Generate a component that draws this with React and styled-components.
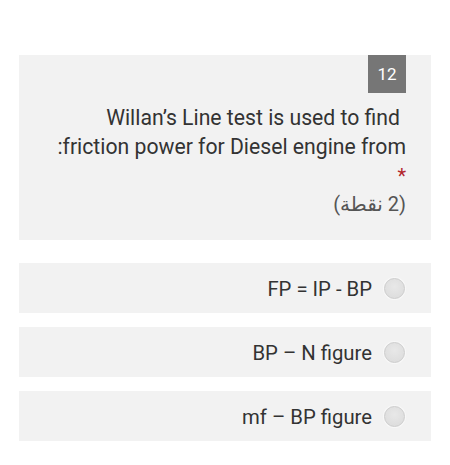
import React from "react";
import styled, { createGlobalStyle } from "styled-components";

const Global = createGlobalStyle`
  html, body { margin: 0; padding: 0; background: #fff; }
  body { font-family: Roboto, "Noto Sans", Arial, sans-serif; }
`;

const Page = styled.div`
  padding: 55px 19px 0 19px;
  display: flex;
  flex-direction: column;
  gap: 23px;
`;

const QuestionCard = styled.div`
  background: #f2f2f2;
  height: 185px;
  box-sizing: border-box;
  padding: 0 25px 0 20px;
  display: flex;
  flex-direction: column;
  align-items: flex-end;
`;

const Badge = styled.div`
  width: 38px;
  height: 38px;
  background: #767676;
  color: #fff;
  font-size: 17px;
  display: flex;
  align-items: center;
  justify-content: center;
`;

const Title = styled.div`
  direction: rtl;
  text-align: right;
  color: #333;
  font-size: 21.2px;
  line-height: 29px;
  margin-top: 10px;
  white-space: nowrap;
`;

const Line = styled.div`
  padding-right: ${(p) => p.$indent || 0}px;
`;

const Star = styled.div`
  color: #b3262d;
  font-size: 20px;
  line-height: 22px;
  margin-top: 4px;
`;

const Points = styled.div`
  direction: rtl;
  color: #555;
  font-size: 20px;
  line-height: 26px;
  margin-top: 4px;
  font-family: Roboto, "Noto Sans", "DejaVu Sans", sans-serif;
`;

const Options = styled.div`
  display: flex;
  flex-direction: column;
  gap: 14px;
`;

const Option = styled.div`
  background: #f2f2f2;
  height: 50px;
  display: flex;
  align-items: center;
  justify-content: flex-end;
  gap: 12px;
  padding-right: 26px;
`;

const OptionText = styled.span`
  color: #333;
  font-size: 20.3px;
  margin-top: 1px;
`;

const Radio = styled.span`
  width: 19px;
  height: 19px;
  border-radius: 50%;
  border: 1px solid #cdcdcd;
  background: radial-gradient(circle at 50% 40%, #e8e8e8, #dadada);
  box-shadow: 0 0 0 1px #f8f8f8;
`;

export default function App() {
  return (
    <>
      <Global />
      <Page>
        <QuestionCard>
          <Badge>12</Badge>
          <Title>
            <Line $indent={6}>Willan’s Line test is used to find</Line>
            <Line>friction power for Diesel engine from:</Line>
          </Title>
          <Star>*</Star>
          <Points>(2 نقطة)</Points>
        </QuestionCard>
        <Options>
          <Option>
            <OptionText>FP = IP - BP</OptionText>
            <Radio />
          </Option>
          <Option>
            <OptionText>BP – N figure</OptionText>
            <Radio />
          </Option>
          <Option>
            <OptionText>mf – BP figure</OptionText>
            <Radio />
          </Option>
        </Options>
      </Page>
    </>
  );
}
